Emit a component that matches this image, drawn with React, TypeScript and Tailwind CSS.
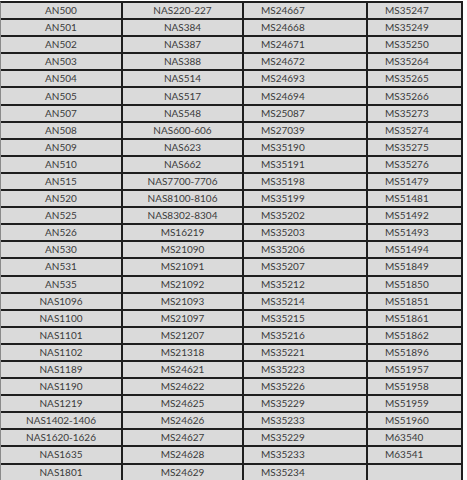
import React from "react";

const col1 = ["AN500", "AN501", "AN502", "AN503", "AN504", "AN505", "AN507", "AN508", "AN509", "AN510", "AN515", "AN520", "AN525", "AN526", "AN530", "AN531", "AN535", "NAS1096", "NAS1100", "NAS1101", "NAS1102", "NAS1189", "NAS1190", "NAS1219", "NAS1402-1406", "NAS1620-1626", "NAS1635", "NAS1801"];
const col2 = ["NAS220-227", "NAS384", "NAS387", "NAS388", "NAS514", "NAS517", "NAS548", "NAS600-606", "NAS623", "NAS662", "NAS7700-7706", "NAS8100-8106", "NAS8302-8304", "MS16219", "MS21090", "MS21091", "MS21092", "MS21093", "MS21097", "MS21207", "MS21318", "MS24621", "MS24622", "MS24625", "MS24626", "MS24627", "MS24628", "MS24629"];
const col3 = ["MS24667", "MS24668", "MS24671", "MS24672", "MS24693", "MS24694", "MS25087", "MS27039", "MS35190", "MS35191", "MS35198", "MS35199", "MS35202", "MS35203", "MS35206", "MS35207", "MS35212", "MS35214", "MS35215", "MS35216", "MS35221", "MS35223", "MS35226", "MS35229", "MS35233", "MS35229", "MS35233", "MS35234"];
const col4 = ["MS35247", "MS35249", "MS35250", "MS35264", "MS35265", "MS35266", "MS35273", "MS35274", "MS35275", "MS35276", "MS51479", "MS51481", "MS51492", "MS51493", "MS51494", "MS51849", "MS51850", "MS51851", "MS51861", "MS51862", "MS51896", "MS51957", "MS51958", "MS51959", "MS51960", "M63540", "M63541", ""];

export default function App() {
  return (
    <div className="w-[467px] h-[480px] bg-white overflow-hidden pt-px" style={{ fontFamily: "Lato, 'Open Sans', sans-serif" }}>
      <div className="w-[463px] border-t-2 border-l border-t-[#1e1e1e] border-l-[#8a8a8a] text-[10px] text-[#3a3a3a]">
        {col1.map((a, i) => (
          <div key={i} className="grid grid-cols-[122px_121px_124px_95px] h-[17.1px]">
            <div className="flex items-center justify-center bg-[#dadada] border-r-2 border-b-2 border-[#1e1e1e]">{a}</div>
            <div className="flex items-center justify-center bg-[#dadada] border-r-2 border-b-2 border-[#1e1e1e]">{col2[i]}</div>
            <div className="flex items-center pl-[17px] bg-[#dadada] border-r-2 border-b-2 border-[#1e1e1e]">{col3[i]}</div>
            <div className="flex items-center pl-[17px] bg-[#dadada] border-r-2 border-b-2 border-[#1e1e1e]">{col4[i]}</div>
          </div>
        ))}
      </div>
    </div>
  );
}
